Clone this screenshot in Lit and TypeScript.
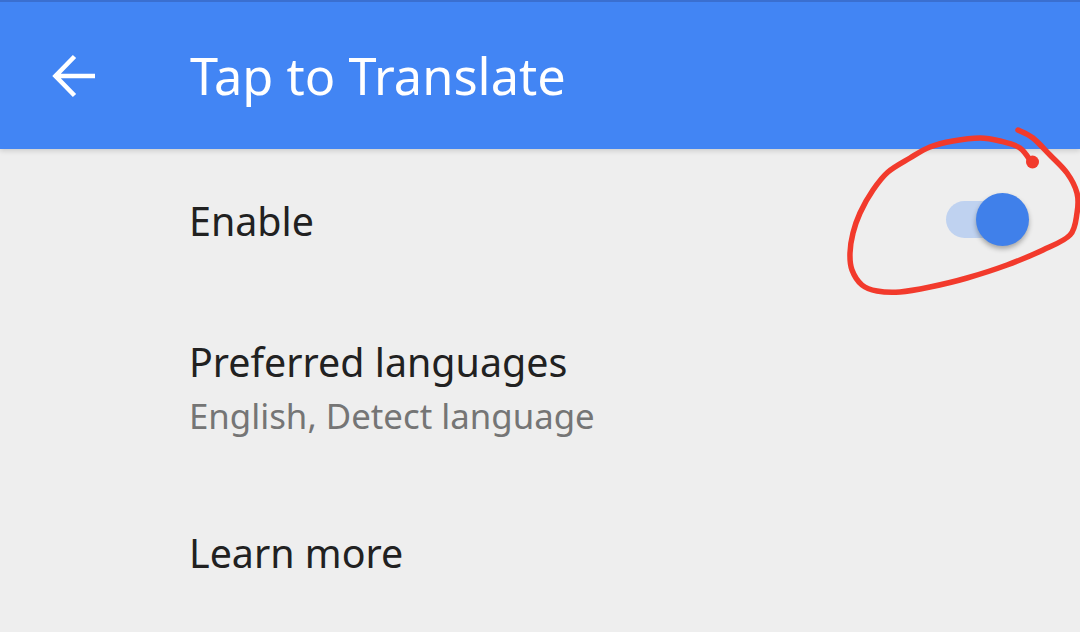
import { LitElement, html, css, svg } from "lit";
import { customElement } from "lit/decorators.js";

const INK: [number, number][] = [
  [1032, 163], [1020, 148], [1000, 141], [980, 138], [953, 141], [930, 147], [910, 158], [888, 172],
  [873, 190], [860, 213], [853, 233], [850, 253], [852, 270], [862, 285], [877, 291], [900, 292],
  [930, 287], [967, 278], [1007, 265], [1043, 250], [1070, 235], [1077, 213], [1077, 193], [1067, 173],
  [1050, 155], [1033, 138], [1018, 130],
];

function smooth(p: [number, number][]) {
  let d = `M${p[0][0]} ${p[0][1]}`;
  for (let i = 0; i < p.length - 1; i++) {
    const a = p[Math.max(0, i - 1)], b = p[i], c = p[i + 1], e = p[Math.min(p.length - 1, i + 2)];
    const c1x = b[0] + (c[0] - a[0]) / 6, c1y = b[1] + (c[1] - a[1]) / 6;
    const c2x = c[0] - (e[0] - b[0]) / 6, c2y = c[1] - (e[1] - b[1]) / 6;
    d += ` C${c1x.toFixed(1)} ${c1y.toFixed(1)} ${c2x.toFixed(1)} ${c2y.toFixed(1)} ${c[0]} ${c[1]}`;
  }
  return d;
}

@customElement("app-root")
export class AppRoot extends LitElement {
  static styles = css`
    :host {
      display: block;
      position: relative;
      width: 1080px;
      height: 632px;
      overflow: hidden;
      background: #eeeeee;
      font-family: "Noto Sans", "Open Sans", sans-serif;
      color: #212121;
    }
    .bar {
      height: 149px;
      box-sizing: border-box;
      background: #4285f4;
      border-top: 2px solid #3a6fd0;
      display: flex;
      align-items: center;
      padding: 0 0 0 52px;
      gap: 94px;
      color: #fff;
      box-shadow: 0 2px 5px rgba(0, 0, 0, 0.14);
      position: relative;
    }
    .back { width: 44px; height: 44px; flex: none; display: block; }
    .title { font-size: 50.5px; line-height: 60px; }
    .list { display: flex; flex-direction: column; padding-left: 189px; }
    .row { display: flex; align-items: center; justify-content: space-between; flex: none; }
    .enable { height: 144px; padding-right: 51px; }
    .prefs { height: 192px; flex-direction: column; align-items: flex-start; justify-content: center; }
    .more { height: 136px; }
    .label { font-size: 39.4px; line-height: 50px; }
    .sub { font-size: 34.8px; line-height: 50px; margin-top: 4px; color: #757575; }
    .switch { position: relative; width: 83px; height: 53px; margin-bottom: 4px; }
    .track {
      position: absolute; left: 0; top: 8px; width: 70px; height: 37px;
      border-radius: 19px; background: #bfd2f0;
    }
    .thumb {
      position: absolute; right: 0; top: 0; width: 53px; height: 53px;
      border-radius: 50%; background: #4080ea;
      box-shadow: 0 3px 5px rgba(0, 0, 0, 0.3);
    }
    .ink { position: absolute; left: 0; top: 0; pointer-events: none; }
  `;

  render() {
    return html`
      <div class="bar">
        <svg class="back" viewBox="0 0 44 44" fill="none" stroke="#fff" stroke-width="4.6">
          <path d="M43 22H3.5M22.5 2.5 3.5 22 22.5 41.5" />
        </svg>
        <div class="title">Tap to Translate</div>
      </div>
      <div class="list">
        <div class="row enable">
          <div class="label">Enable</div>
          <div class="switch"><div class="track"></div><div class="thumb"></div></div>
        </div>
        <div class="row prefs">
          <div class="label">Preferred languages</div>
          <div class="sub">English, Detect language</div>
        </div>
        <div class="row more"><div class="label">Learn more</div></div>
      </div>
      <svg class="ink" width="1080" height="632" viewBox="0 0 1080 632" fill="none">
        ${svg`<path d=${smooth(INK)} stroke="#f23a2c" stroke-width="5.5" stroke-linecap="round" stroke-linejoin="round"/>`}
        <circle cx="1032.5" cy="162" r="6.5" fill="#f23a2c" />
      </svg>
    `;
  }
}
